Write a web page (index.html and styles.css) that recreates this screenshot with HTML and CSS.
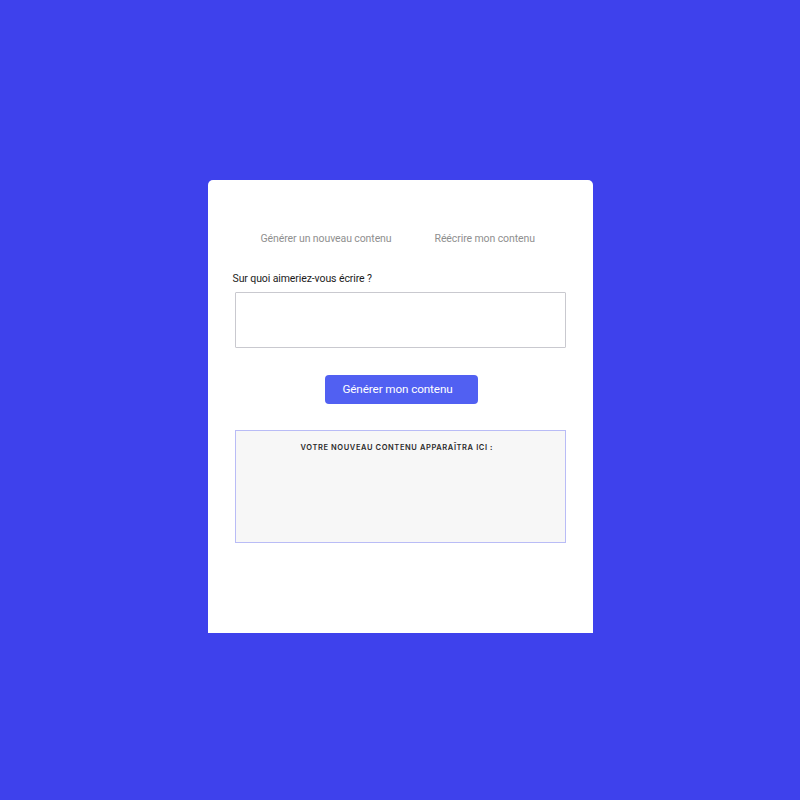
FILE: index.html
```html
<!DOCTYPE html>
<html lang="fr">
<head>
<meta charset="utf-8">
<link rel="stylesheet" href="styles.css">
</head>
<body>
<div class="stage">
  <div class="card">
    <div class="tabs">
      <span class="tab">Générer un nouveau contenu</span>
      <span class="tab">Réécrire mon contenu</span>
    </div>
    <label class="label">Sur quoi aimeriez-vous écrire ?</label>
    <textarea class="input"></textarea>
    <div class="actions">
      <button class="btn">Générer mon contenu</button>
    </div>
    <div class="output">
      <div class="output-title">VOTRE NOUVEAU CONTENU APPARAÎTRA ICI :</div>
    </div>
  </div>
</div>
</body>
</html>
```
FILE: styles.css
```css
html, body {
  margin: 0;
  padding: 0;
  background: #3e41ec;
  font-family: Roboto, "Noto Sans", sans-serif;
}
.stage {
  height: 800px;
  display: flex;
  justify-content: center;
  padding-top: 180px;
  box-sizing: border-box;
}
.card {
  width: 385px;
  height: 453px;
  background: #fff;
  border-radius: 5px 5px 0 0;
  box-sizing: border-box;
  padding: 50px 27px 0 27px;
  display: flex;
  flex-direction: column;
}
.tabs {
  display: flex;
  gap: 43px;
  padding-left: 26px;
  height: 16px;
  align-items: center;
}
.tab {
  font-size: 10.5px;
  letter-spacing: -0.1px;
  color: #8f8f8f;
}
.label {
  margin-top: 26px;
  margin-left: -2px;
  font-size: 10.5px;
  letter-spacing: -0.1px;
  color: #1c1c1c;
  line-height: 14px;
}
.input {
  margin-top: 6px;
  width: 331px;
  height: 56px;
  box-sizing: border-box;
  border: 1px solid #c9c9cf;
  border-radius: 1px;
  resize: none;
  background: #fff;
  padding: 0;
}
.actions {
  display: flex;
  justify-content: center;
  margin-top: 27px;
}
.btn {
  width: 153px;
  height: 29px;
  background: #5160f2;
  border: none;
  border-radius: 4px;
  color: #fff;
  font-family: Roboto, "Noto Sans", sans-serif;
  font-size: 11.7px;
  letter-spacing: -0.1px;
  padding: 0 7px 2px 0;
  margin-left: 2px;
}
.output {
  margin-top: 26px;
  width: 331px;
  height: 113px;
  box-sizing: border-box;
  background: #f7f7f7;
  border: 1px solid #b9bcf6;
  padding-top: 12px;
}
.output-title {
  font-family: Inter, "Noto Sans", sans-serif;
  font-size: 7.5px;
  font-weight: 600;
  letter-spacing: 0.6px;
  color: #2a2a2a;
  padding-left: 65px;
}
```
